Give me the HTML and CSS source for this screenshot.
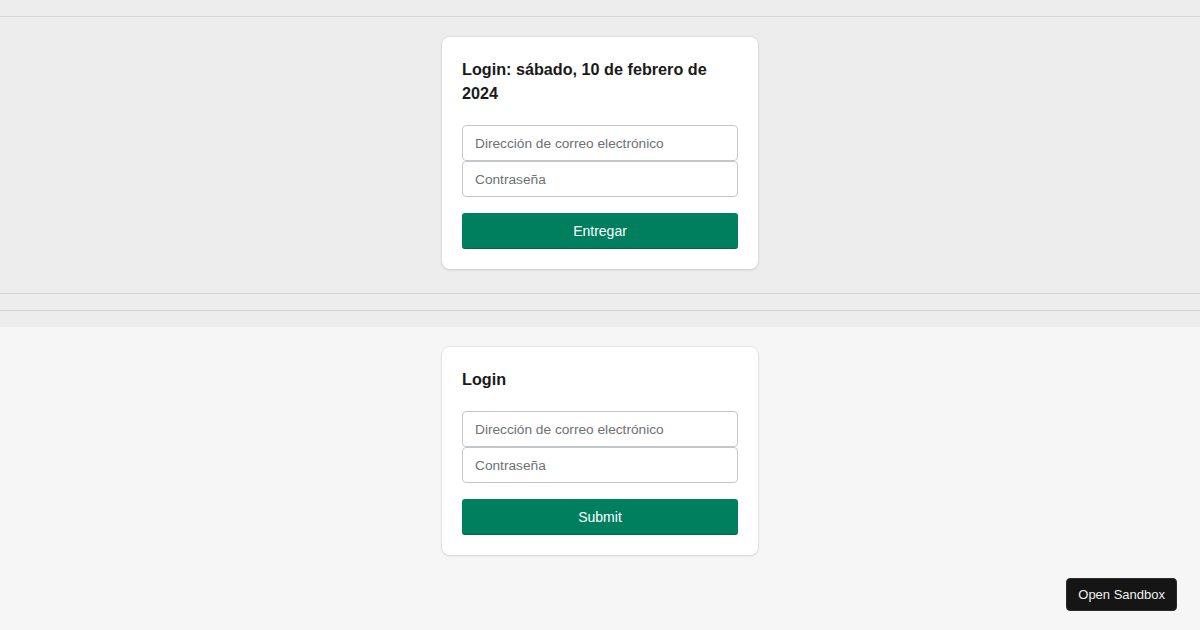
FILE: index.html
```html
<!DOCTYPE html>
<html lang="es">
<head>
<meta charset="UTF-8" />
<title>Login</title>
<link rel="stylesheet" href="styles.css">
</head>
<body>
<div class="story dark">
	<div class="story-top"></div>
	<div class="story-body">
		<form class="card">
			<div class="title">Login: sábado, 10 de febrero de 2024</div>
			<div class="fields">
				<input type="email" class="field" placeholder="Dirección de correo electrónico" />
				<input type="password" class="field" placeholder="Contraseña" />
			</div>
			<button type="button" class="submit">Entregar</button>
		</form>
	</div>
	<div class="story-gap"></div>
</div>
<div class="story light">
	<div class="story-body">
		<form class="card">
			<div class="title">Login</div>
			<div class="fields">
				<input type="email" class="field" placeholder="Dirección de correo electrónico" />
				<input type="password" class="field" placeholder="Contraseña" />
			</div>
			<button type="button" class="submit">Submit</button>
		</form>
	</div>
</div>
<button type="button" class="sandbox">Open Sandbox</button>
</body>
</html>
```

FILE: styles.css
```css
html, body { margin: 0; padding: 0; }
body { font-family: "Liberation Sans", Helvetica, Arial, sans-serif; color: rgb(32,32,32); background: #f6f6f6; min-height: 630px; }

.story.dark { background: #ededed; padding-bottom: 16px; }
.story.light { background: #f6f6f6; }
.story-top { height: 16px; border-bottom: 1px solid #d5d5d5; }
.story-body { display: flex; justify-content: center; padding: 20px 0 24px; }
.story-gap { height: 16px; border-top: 1px solid #d5d5d5; border-bottom: 1px solid #d5d5d5; }

.card { width: 276px; padding: 20px; background: #ffffff; border-radius: 8px;
	box-shadow: 0px 0px 0px 1px rgba(63,63,68,0.05), 0px 1px 3px rgba(63,63,68,0.15); }

.title { font-size: 16.2px; font-weight: bold; line-height: 24px; color: #1a1a1a; margin-bottom: 20px; }

.fields { display: flex; flex-direction: column; }
.field { box-sizing: border-box; width: 100%; height: 36px; margin: 0; padding: 0 12px;
	font-family: inherit; font-size: 13.7px; color: #202223;
	border: 1px solid #c4c7ca; border-radius: 4px; background: #ffffff; outline: none; }
.field::placeholder { color: #6d7175; }

.submit { display: block; width: 100%; height: 36px; margin-top: 16px; border: none; border-radius: 3px;
	background: #007f5f; color: #ffffff; font-family: inherit; font-size: 14px; cursor: pointer;
	box-shadow: inset 0px -1px 0px rgba(0,0,0,0.2); }

.sandbox { position: fixed; right: 23px; bottom: 19px; height: 33px; padding: 0 11px;
	background: #151515; color: #f0f0f0; border: 1px solid #2a2a2a; border-radius: 4px;
	font-family: inherit; font-size: 13px; cursor: pointer; }
```
